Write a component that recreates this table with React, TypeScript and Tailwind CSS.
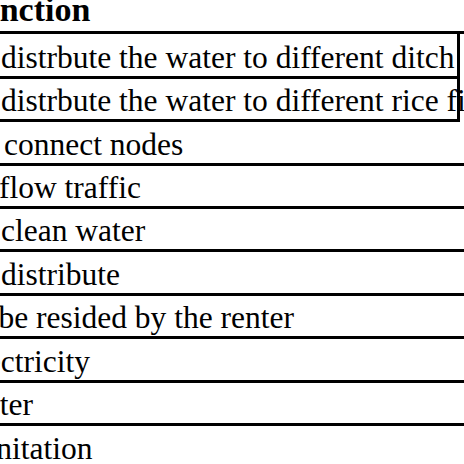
import React from 'react';

interface Row {
  text: string;
  shift: string;
  h: string;
}

const rows: Row[] = [
  { text: 'distrbute the water to different ditch', shift: 'ml-[1px]', h: 'h-[45px]' },
  { text: 'distrbute the water to different rice field', shift: 'ml-[1px]', h: 'h-[43px]' },
  { text: 'connect nodes', shift: 'ml-[4px]', h: 'h-[44px]' },
  { text: 'flow traffic', shift: 'ml-[-1px]', h: 'h-[43px]' },
  { text: 'clean water', shift: 'ml-[1px]', h: 'h-[43px]' },
  { text: 'distribute', shift: 'ml-[1px]', h: 'h-[44px]' },
  { text: 'to be resided by the renter', shift: 'ml-[-34px]', h: 'h-[43px]' },
  { text: 'electricity', shift: 'ml-[-36px]', h: 'h-[44px]' },
  { text: 'water', shift: 'ml-[-37px]', h: 'h-[43px]' },
  { text: 'sanitation', shift: 'ml-[-30px]', h: 'h-[44px]' },
];

export default function App() {
  return (
    <div className="w-[464px] h-[464px] overflow-hidden bg-white text-black font-['Liberation_Serif','Times_New_Roman',serif]">
      <div className="h-[34px] border-b-[3px] border-black flex items-end">
        <span className="ml-[-40px] font-bold text-[34px] leading-none pb-[4px] whitespace-nowrap">Function</span>
      </div>
      {rows.map((r, i) => (
        <div
          key={i}
          className={`${r.h} border-b-[3px] border-black flex items-end pb-[3px] ${i < 2 ? 'w-[460px] border-r-[3px] overflow-visible' : 'overflow-hidden'}`}
        >
          <span className={`${r.shift} text-[31.5px] leading-none whitespace-nowrap`}>{r.text}</span>
        </div>
      ))}
    </div>
  );
}
